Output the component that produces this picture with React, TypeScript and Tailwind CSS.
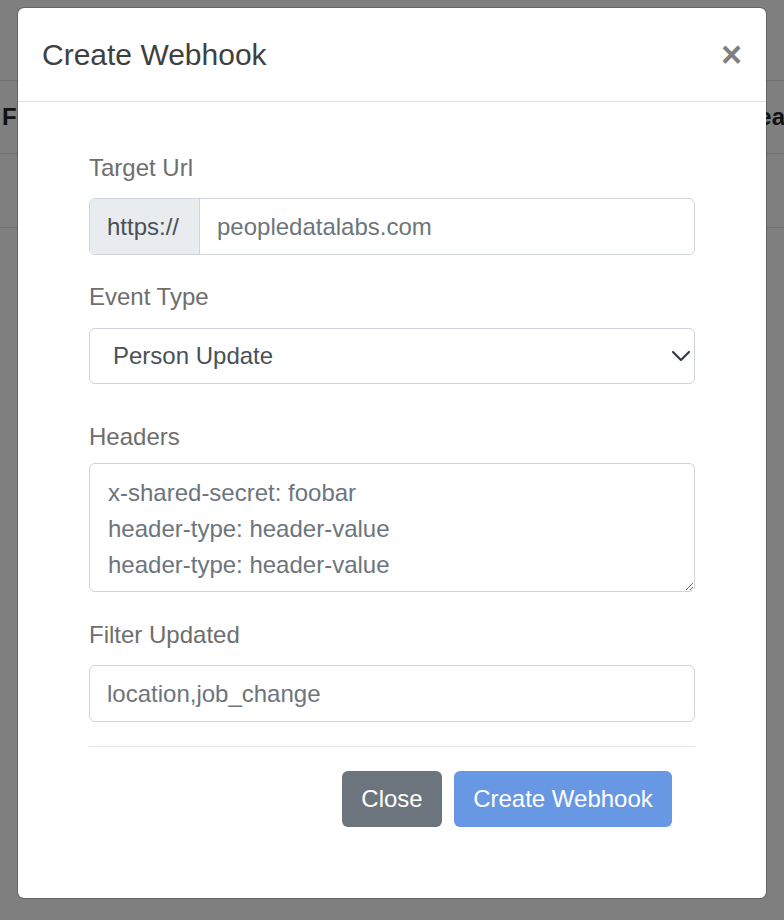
export default function App() {
  return (
    <div className="relative h-[920px] w-[784px] overflow-hidden bg-white font-['Liberation_Sans',Arial,sans-serif] text-[#212529]">
      {/* page behind the modal */}
      <div className="pt-[80px]">
        <div className="flex h-[74px] items-center whitespace-nowrap border-y border-[#dee2e6] text-[24px] font-bold">
          <span className="pl-[2px]">Filters</span>
          <span className="-mr-[37px] ml-auto">Created</span>
        </div>
        <div className="h-[74px] border-b border-[#dee2e6]" />
      </div>

      <div className="absolute inset-0 bg-black/50" />

      <div className="absolute left-[17px] top-[7px] w-[750px] rounded-[7px] border border-black/20 bg-white bg-clip-padding">
        <div className="flex h-[94px] items-center justify-between border-b border-[#dee2e6] px-[24px]">
          <h5 className="text-[30px] leading-[45px] text-[#404040]">Create Webhook</h5>
          <button className="text-[36px] font-bold leading-none text-black/50">×</button>
        </div>

        <div className="px-[71px] pb-[71px] pt-[48px] text-[24px] leading-[36px]">
          <label className="mb-[12px] block text-[#6e6e6e]">Target Url</label>
          <div className="mb-[24px] flex h-[57px] rounded-[6px] border border-[#ced4da]">
            <span className="flex w-[110px] items-center rounded-l-[5px] border-r border-[#ced4da] bg-[#e9ecef] pl-[17px] text-[#495057]">
              https://
            </span>
            <input
              className="min-w-0 flex-1 rounded-r-[6px] bg-white pl-[17px] text-[#495057] outline-none placeholder:text-[#6c757d]"
              placeholder="peopledatalabs.com"
            />
          </div>

          <label className="mb-[13px] block text-[#6e6e6e]">Event Type</label>
          <div className="relative mb-[35px]">
            <select
              className="block h-[56px] w-full appearance-none rounded-[6px] border border-[#ced4da] bg-white pl-[23px] text-[#495057] outline-none"
              defaultValue="person"
            >
              <option value="person">Person Update</option>
              <option value="company">Company Update</option>
            </select>
            <svg
              className="pointer-events-none absolute right-[4px] top-1/2 -translate-y-1/2"
              width="20"
              height="11"
              viewBox="0 0 20 11"
              fill="none"
              stroke="#343a40"
              strokeWidth="2.2"
              strokeLinecap="round"
              strokeLinejoin="round"
            >
              <path d="M2 1.5 10 9.5 18 1.5" />
            </svg>
          </div>

          <label className="mb-[8px] block text-[#6e6e6e]">Headers</label>
          <textarea
            className="mb-[25px] block h-[129px] w-full resize-y rounded-[6px] border border-[#ced4da] px-[18px] pb-[7px] pt-[11px] text-[#495057] outline-none placeholder:text-[#6c757d]"
            rows={3}
            placeholder={"x-shared-secret: foobar\nheader-type: header-value\nheader-type: header-value"}
          />

          <label className="mb-[12px] block text-[#6e6e6e]">Filter Updated</label>
          <input
            className="block h-[57px] w-full rounded-[6px] border border-[#ced4da] px-[17px] text-[#495057] outline-none placeholder:text-[#6c757d]"
            placeholder="location,job_change"
          />

          <hr className="mt-[24px] border-t border-[#e2e5e9]" />

          <div className="mt-[24px] flex justify-end gap-[12px] pr-[23px]">
            <button className="h-[56px] w-[100px] rounded-[6px] bg-[#6c757d] text-white">Close</button>
            <button className="h-[56px] w-[218px] rounded-[6px] bg-[#6897e4] text-white">Create Webhook</button>
          </div>
        </div>
      </div>
    </div>
  );
}
